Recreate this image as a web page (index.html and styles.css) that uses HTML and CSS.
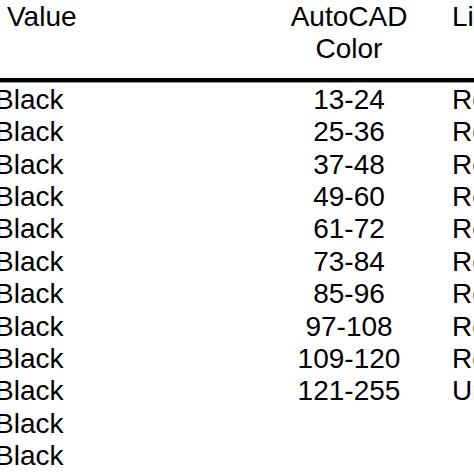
FILE: index.html
```html
<!DOCTYPE html>
<html>
<head>
<meta charset="utf-8">
<link rel="stylesheet" href="styles.css">
</head>
<body>
<div class="table">
  <div class="head">
    <div class="c1 hv">Value</div>
    <div class="c2">AutoCAD<br>Color</div>
    <div class="c3">Lineweight</div>
  </div>
  <div class="rows">
    <div class="row"><div class="c1">Black</div><div class="c2">13-24</div><div class="c3">Reserved</div></div>
    <div class="row"><div class="c1">Black</div><div class="c2">25-36</div><div class="c3">Reserved</div></div>
    <div class="row"><div class="c1">Black</div><div class="c2">37-48</div><div class="c3">Reserved</div></div>
    <div class="row"><div class="c1">Black</div><div class="c2">49-60</div><div class="c3">Reserved</div></div>
    <div class="row"><div class="c1">Black</div><div class="c2">61-72</div><div class="c3">Reserved</div></div>
    <div class="row"><div class="c1">Black</div><div class="c2">73-84</div><div class="c3">Reserved</div></div>
    <div class="row"><div class="c1">Black</div><div class="c2">85-96</div><div class="c3">Reserved</div></div>
    <div class="row"><div class="c1">Black</div><div class="c2">97-108</div><div class="c3">Reserved</div></div>
    <div class="row"><div class="c1">Black</div><div class="c2">109-120</div><div class="c3">Reserved</div></div>
    <div class="row"><div class="c1">Black</div><div class="c2">121-255</div><div class="c3">Unused</div></div>
    <div class="row"><div class="c1">Black</div><div class="c2"></div><div class="c3"></div></div>
    <div class="row"><div class="c1">Black</div><div class="c2"></div><div class="c3"></div></div>
  </div>
</div>
</body>
</html>
```
FILE: styles.css
```css
html, body {
  margin: 0;
  padding: 0;
  background: #fff;
  overflow: hidden;
}
body {
  width: 474px;
  height: 474px;
  font-family: "Liberation Sans", Arial, sans-serif;
  font-size: 28px;
  color: #000;
}
.table {
  width: 474px;
  overflow: hidden;
}
.head, .row {
  display: grid;
  grid-template-columns: 290px 118px 66px;
  white-space: nowrap;
}
.head {
  line-height: 32.4px;
  padding-top: 1px;
  padding-bottom: 12px;
  border-bottom: 4px solid #000;
  box-shadow: 0 1px 0 #9a9a9a;
}
.rows {
  padding-top: 2px;
}
.row {
  line-height: 32.4px;
}
.c1 {
  margin-left: -5px;
}
.hv {
  margin-left: 7px;
}
.c2 {
  text-align: center;
}
.c3 {
  padding-left: 44px;
  overflow: hidden;
}
```
